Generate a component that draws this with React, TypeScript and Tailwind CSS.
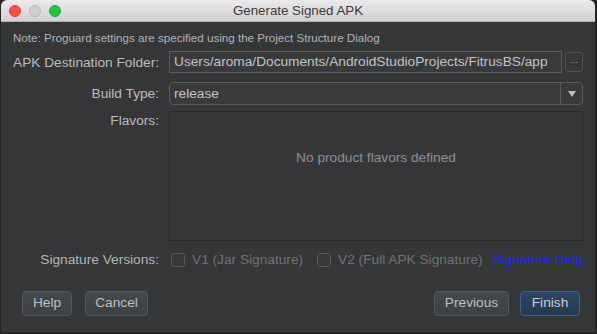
const font = { fontFamily: '"Liberation Sans", Arial, sans-serif' };

function Checkbox({ label }: { label: string }) {
  return (
    <span className="flex items-center gap-[7px] text-[#717273]">
      <span className="w-[14px] h-[14px] rounded-[3px] border border-[#57595b] bg-[#37383a]" />
      <span>{label}</span>
    </span>
  );
}

function Button({ children, primary, className = '' }: { children: string; primary?: boolean; className?: string }) {
  return (
    <button
      className={
        primary
          ? `h-[25px] rounded-[4px] border border-[#3c6290] bg-gradient-to-b from-[#2e4765] to-[#26384f] text-[#c7ccd3] text-[13.7px] ${className}`
          : `h-[25px] rounded-[4px] border border-[#555759] bg-gradient-to-b from-[#46494b] to-[#3e4143] text-[#bdbfc1] text-[13.7px] ${className}`
      }
    >
      {children}
    </button>
  );
}

export default function App() {
  return (
    <div className="w-[597px] h-[334px] bg-[#232425] overflow-hidden" style={font}>
      <div className="ml-[1px] w-[594px] h-[332px] rounded-t-[6px] bg-[#353638] flex flex-col overflow-hidden">
        {/* title bar */}
        <div className="h-[22px] relative flex items-center justify-center bg-gradient-to-b from-[#ebe9eb] to-[#d3d1d3] border-b border-[#b4b2b4]">
          <div className="absolute left-[8px] top-[5px] flex gap-[8px]">
            <span className="w-[12px] h-[12px] rounded-full bg-[#fc4e4a] border border-[#de3c38]" />
            <span className="w-[12px] h-[12px] rounded-full bg-[#cfcdcf] border border-[#b9b7b9]" />
            <span className="w-[12px] h-[12px] rounded-full bg-[#2ac13f] border border-[#1ea82f]" />
          </div>
          <span className="text-[13.3px] text-[#3a3a3a]">Generate Signed APK</span>
        </div>

        <div className="flex-1 flex flex-col px-[12px] text-[13.7px] text-[#bbbcbd]">
          <div className="mt-[9px] text-[11.6px] text-[#b3b4b5] leading-[14px]">
            Note: Proguard settings are specified using the Project Structure Dialog
          </div>

          <div className="grid grid-cols-[146px_1fr] gap-x-[10px] mt-[6px]">
            <div className="text-right leading-[22px] pt-[1px] self-start whitespace-nowrap">APK Destination Folder:</div>
            <div className="flex gap-[3px]">
              <div className="flex-1 h-[22px] border border-[#5a5c5e] bg-[#393a3c] px-[4px] leading-[20px] text-[#c2c3c4] overflow-hidden whitespace-nowrap">
                Users/aroma/Documents/AndroidStudioProjects/FitrusBS/app
              </div>
              <div className="w-[18px] h-[20px] mt-[1px] rounded-[3px] border border-[#505254] flex items-center justify-center text-[9px] text-[#a5a6a7] leading-none pb-[3px]">
                ...
              </div>
            </div>

            <div className="text-right leading-[23px] mt-[8px]">Build Type:</div>
            <div className="mt-[8px] h-[23px] flex rounded-[4px] border border-[#5a5c5e] bg-[#393a3c]">
              <div className="flex-1 px-[4px] leading-[21px] text-[#c2c3c4]">release</div>
              <div className="w-[22px] border-l border-[#5a5c5e] flex items-center justify-center">
                <svg width="10" height="8" viewBox="0 0 10 8">
                  <path d="M1 1h8L5 7z" fill="#bcbdbe" />
                </svg>
              </div>
            </div>

            <div className="text-right mt-[7px] leading-[18px]">Flavors:</div>
            <div className="mt-[6px] h-[130px] border border-[#28292a] bg-[#363739] flex items-center justify-center pb-[36px] text-[#8f9091]">
              No product flavors defined
            </div>
          </div>

          <div className="grid grid-cols-[146px_1fr] gap-x-[10px] mt-[9px] items-center h-[16px]">
            <div className="text-right text-[#b4b5b6] whitespace-nowrap">Signature Versions:</div>
            <div className="flex items-center whitespace-nowrap">
              <span className="ml-[2px]">
                <Checkbox label="V1 (Jar Signature)" />
              </span>
              <span className="ml-[14px]">
                <Checkbox label="V2 (Full APK Signature)" />
              </span>
              <a className="ml-[10px] text-[#1d22ff] underline">Signature Help</a>
            </div>
          </div>

          <div className="flex mt-[25px] pl-[9px] pr-[3px]">
            <Button className="w-[50px]">Help</Button>
            <Button className="w-[63px] ml-[13px]">Cancel</Button>
            <div className="flex-1" />
            <Button className="w-[75px]">Previous</Button>
            <Button primary className="w-[60px] ml-[11px]">Finish</Button>
          </div>
        </div>
      </div>
    </div>
  );
}
